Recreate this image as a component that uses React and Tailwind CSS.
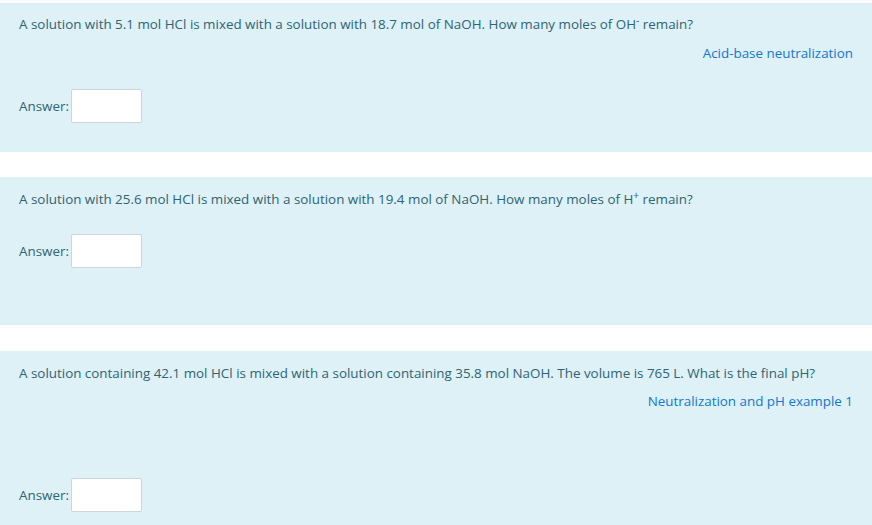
import React from 'react'

const font = { fontFamily: '"Open Sans", "Liberation Sans", sans-serif' }

function AnswerRow() {
  return (
    <div className="flex items-center gap-[2px]">
      <label>Answer:</label>
      <input type="text" className="h-[34px] w-[71px] rounded-[2px] border border-[#ced4da] bg-white" />
    </div>
  )
}

export default function App() {
  return (
    <div style={font} className="min-h-[525px] bg-white pt-[3px] text-[13.4px] leading-[20px] text-[#2f6473]">
      {/* Question 1 */}
      <div className="h-[149px] bg-[#def1f7] px-[19px] pt-[11px]">
        <p>
          A solution with 5.1 mol HCl is mixed with a solution with 18.7 mol of NaOH. How many moles of OH
          <sup className="text-[10px]">-</sup> remain?
        </p>
        <div className="mt-[9px] text-right">
          <a href="#" className="text-[#1177d1]">Acid-base neutralization</a>
        </div>
        <div className="mt-[26px]">
          <AnswerRow />
        </div>
      </div>

      <div className="h-[25px]" />

      {/* Question 2 */}
      <div className="h-[148px] bg-[#def1f7] px-[19px] pt-[12px]">
        <p>
          A solution with 25.6 mol HCl is mixed with a solution with 19.4 mol of NaOH. How many moles of H
          <sup className="text-[10px]">+</sup> remain?
        </p>
        <div className="mt-[25px]">
          <AnswerRow />
        </div>
      </div>

      <div className="h-[26px]" />

      {/* Question 3 */}
      <div className="h-[174px] bg-[#def1f7] px-[19px] pt-[12px]">
        <p>
          A solution containing 42.1 mol HCl is mixed with a solution containing 35.8 mol NaOH. The volume is 765 L. What is the final pH?
        </p>
        <div className="mt-[8px] text-right">
          <a href="#" className="text-[#1177d1]">Neutralization and pH example 1</a>
        </div>
        <div className="mt-[67px]">
          <AnswerRow />
        </div>
      </div>
    </div>
  )
}
